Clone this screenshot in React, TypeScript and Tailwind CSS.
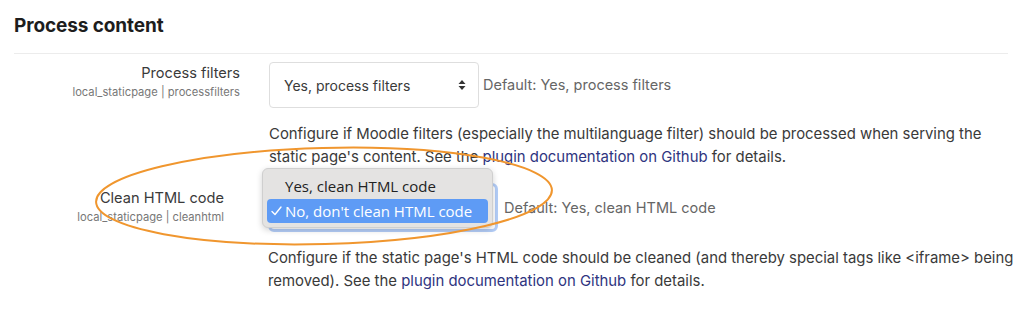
import React from "react";

const font = { fontFamily: "Inter, 'Noto Sans', sans-serif" };

const SelectArrows = () => (
  <svg width="8" height="12" viewBox="0 0 8 12" className="shrink-0">
    <path d="M4 1 L7.5 5 L0.5 5 Z" fill="#333" />
    <path d="M4 11 L7.5 7 L0.5 7 Z" fill="#333" />
  </svg>
);

const Check = () => (
  <svg width="11" height="10" viewBox="0 0 11 10" className="mr-[3px] shrink-0">
    <path d="M1 5.5 L4 8.5 L10 1" fill="none" stroke="white" strokeWidth="1.4" strokeLinecap="round" strokeLinejoin="round" />
  </svg>
);

export default function App() {
  return (
    <div className="relative w-[1024px] h-[317px] bg-white text-[#3a3a3a] overflow-hidden" style={font}>
      <div className="px-[14px] pt-[14px]">
        <h2 className="text-[19px] font-bold text-[#1d1d1d] leading-[24px] tracking-[-0.1px]">Process content</h2>
        <div className="mt-[15px] h-px bg-[#ececec] w-[994px]"></div>

        {/* Process filters */}
        <div className="flex mt-[8px]">
          <div className="w-[226px] shrink-0 text-right pt-[1px]">
            <div className="text-[14.6px] leading-[20px]">Process filters</div>
            <div className="text-[11.2px] leading-[18px] text-[#777]">local_staticpage | processfilters</div>
          </div>
          <div className="ml-[29px] shrink-0 w-[760px]">
            <div className="flex items-center">
              <div className="w-[210px] h-[46px] border border-[#dedede] rounded-[4px] flex items-center justify-between pl-[14px] pr-[12px]">
                <span className="text-[14px]">Yes, process filters</span>
                <SelectArrows />
              </div>
              <span className="ml-[4px] text-[14.5px] text-[#666]">Default: Yes, process filters</span>
            </div>
            <p className="mt-[15px] text-[14.9px] leading-[23px]">
              Configure if Moodle filters (especially the multilanguage filter) should be processed when serving the
              <br />
              static page's content. See the <span className="text-[#2e3480]">plugin documentation on Github</span> for details.
            </p>
          </div>
        </div>

        {/* Clean HTML */}
        <div className="flex mt-[14px]">
          <div className="w-[226px] shrink-0 text-right pr-[16px] pt-[5px]">
            <div className="text-[14.6px] leading-[20px]">Clean HTML code</div>
            <div className="text-[11.2px] leading-[18px] text-[#777]">local_staticpage | cleanhtml</div>
          </div>
          <div className="ml-[28px] shrink-0 w-[760px]">
            <div className="flex items-center">
              <div className="w-[230px] h-[49px] rounded-[6px] border-[3px] border-[#b3cdf7] bg-white"></div>
              <span className="ml-[6px] text-[14.5px] text-[#666]">Default: Yes, clean HTML code</span>
            </div>
            <p className="mt-[15px] text-[14.9px] leading-[23px]">
              Configure if the static page's HTML code should be cleaned (and thereby special tags like &lt;iframe&gt; being
              <br />
              removed). See the <span className="text-[#2e3480]">plugin documentation on Github</span> for details.
            </p>
          </div>
        </div>
      </div>

      {/* Open dropdown menu */}
      <div
        className="absolute left-[262px] top-[168px] w-[231px] h-[60px] rounded-[6px] bg-[#e4e3e2] border border-[#cfcfcf] shadow-[0_2px_6px_rgba(0,0,0,0.18)] px-[4px] pt-[5px]"
        style={{ fontFamily: "'Open Sans', Inter, sans-serif" }}
      >
        <div className="h-[24px] flex items-center pl-[18px] text-[15px] text-[#222]">Yes, clean HTML code</div>
        <div className="mt-[1px] h-[24px] rounded-[4px] bg-[#5e9bf5] flex items-center pl-[4px] text-[15px] text-white">
          <Check />
          <span>No, don't clean HTML code</span>
        </div>
      </div>

      {/* Annotation ellipse */}
      <svg className="absolute left-0 top-0 pointer-events-none" width="1024" height="317">
        <ellipse cx="324" cy="196" rx="228" ry="48" fill="none" stroke="#f0962e" strokeWidth="2" transform="rotate(-1.5 324 196)" />
      </svg>
    </div>
  );
}
